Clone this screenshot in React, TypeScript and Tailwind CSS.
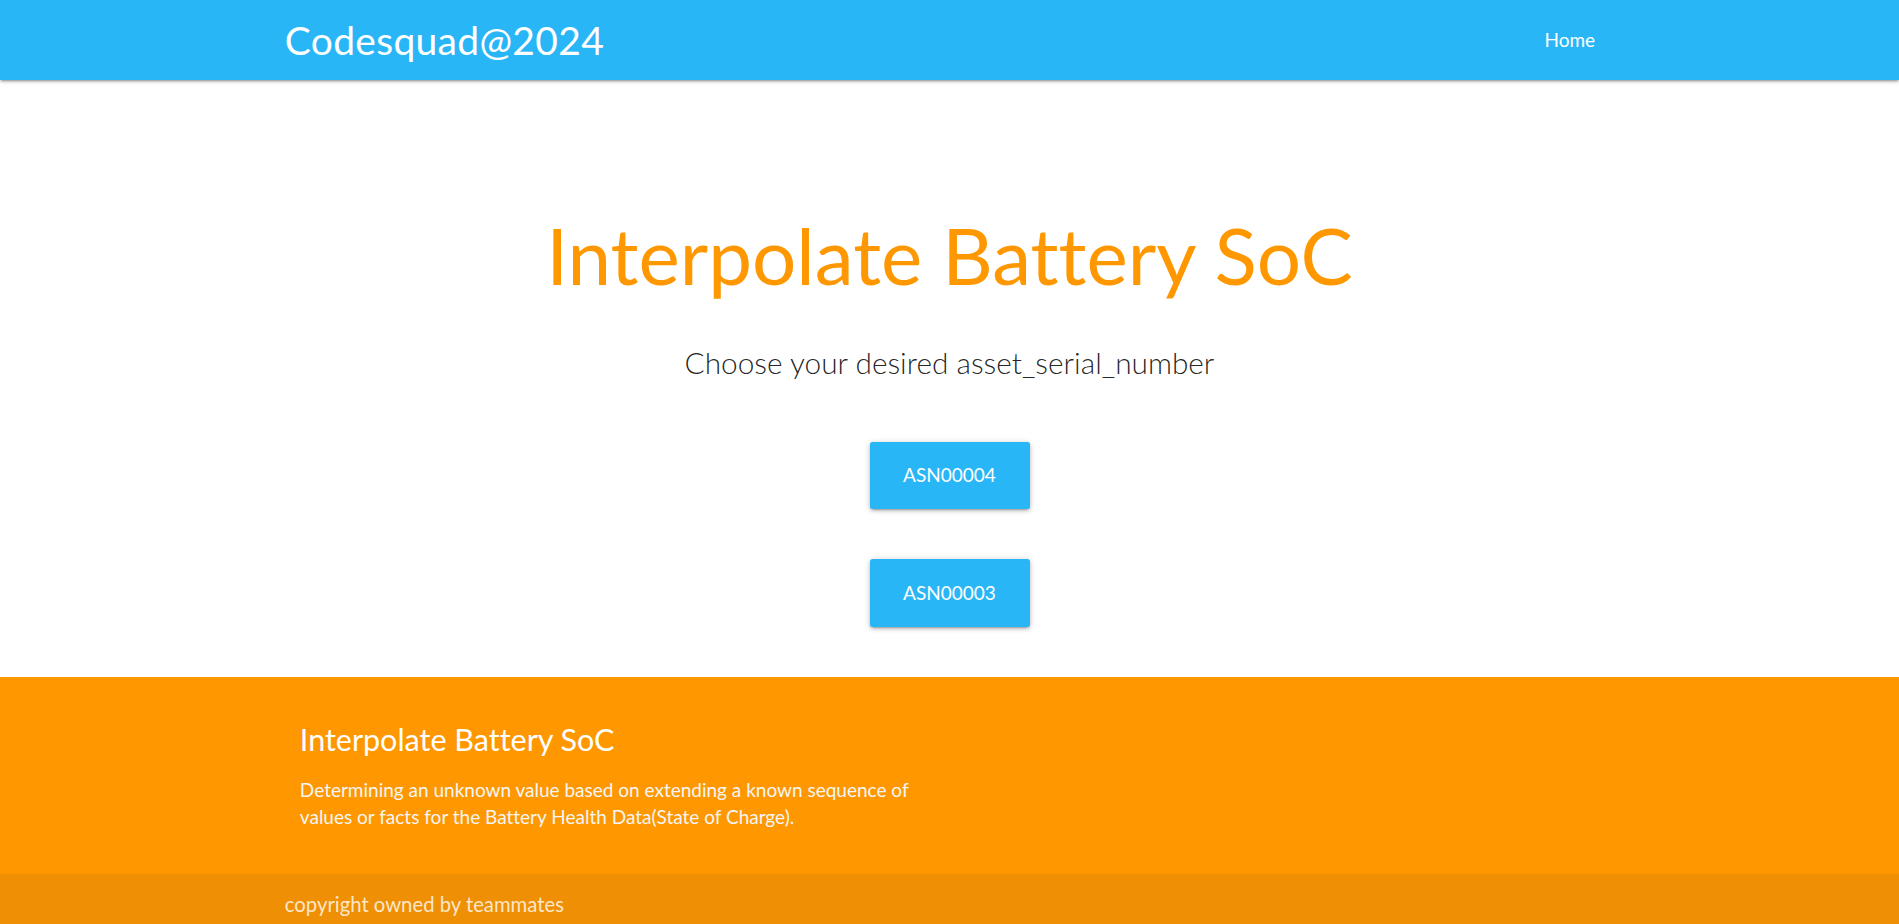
import React from "react";

export default function App() {
  return (
    <div className="min-h-screen bg-white font-[Lato,sans-serif] [font-variant-ligatures:none]">
      <nav className="relative z-10 h-[80px] bg-[#29b6f6] shadow-[0_2px_2px_0_rgba(0,0,0,0.14),0_3px_1px_-2px_rgba(0,0,0,0.12),0_1px_5px_0_rgba(0,0,0,0.2)]">
        <div className="mx-auto flex h-full w-[70%] items-center justify-between">
          <a className="text-[39px] leading-[80px] tracking-[0.3px] text-white">Codesquad@2024</a>
          <ul className="flex">
            <li>
              <a className="block px-[19px] text-[19px] leading-[80px] text-white">Home</a>
            </li>
          </ul>
        </div>
      </nav>

      <main className="flex flex-col items-center pt-[132px] pb-[50px]">
        <h1 className="text-[78.2px] leading-[1.1] font-normal text-[#ff9800]">Interpolate Battery SoC</h1>
        <h5 className="mt-[49px] text-[29.8px] leading-[1.1] font-light text-[rgba(0,0,0,0.87)]">
          Choose your desired asset_serial_number
        </h5>
        <div className="mt-[62px] flex flex-col items-center gap-[50px]">
          {["ASN00004", "ASN00003"].map((sn) => (
            <button
              key={sn}
              className="flex h-[67.5px] w-[160px] items-center justify-center rounded-[2.5px] bg-[#29b6f6] text-[19px] text-white shadow-[0_2px_3px_0_rgba(0,0,0,0.14),0_4px_1px_-3px_rgba(0,0,0,0.12),0_1px_6px_0_rgba(0,0,0,0.2)]"
            >
              {sn}
            </button>
          ))}
        </div>
      </main>

      <footer className="bg-[#ff9800] text-white">
        <div className="mx-auto w-[70%] pt-[46.6px] pb-[43px]">
          <div className="w-[664px] px-[15px]">
            <h5 className="text-[30.5px] leading-[1.1] font-normal text-white">Interpolate Battery SoC</h5>
            <p className="mt-[19px] text-[19px] leading-[27.5px] text-[#f5f5f5]">
              Determining an unknown value based on extending a known sequence of values or facts for the Battery Health Data(State of Charge).
            </p>
          </div>
        </div>
        <div className="flex h-[62px] items-center bg-[#ef9004]">
          <div className="mx-auto w-[70%] text-[20.3px] leading-[27.5px] text-[rgba(255,255,255,0.8)]">
            copyright owned by teammates
          </div>
        </div>
      </footer>
    </div>
  );
}
